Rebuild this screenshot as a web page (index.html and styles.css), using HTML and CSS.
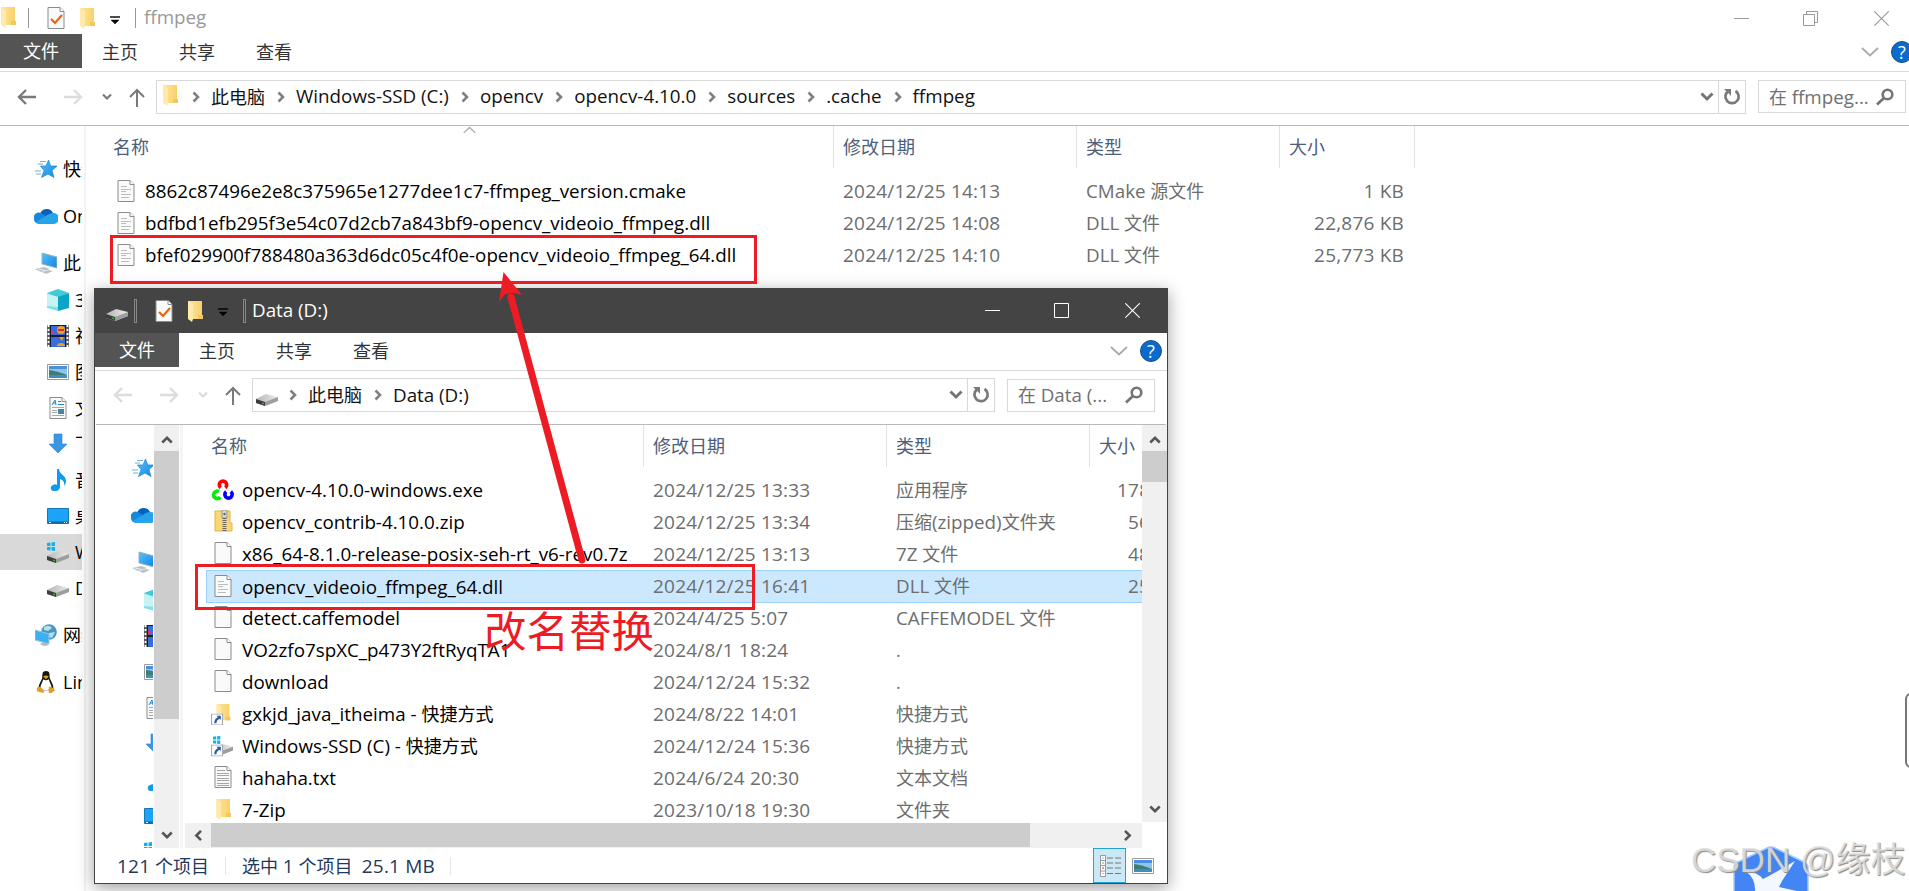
FILE: index.html
```
<!DOCTYPE html>
<html lang="zh-CN">
<head>
  <meta charset="UTF-8">
  <title>ffmpeg</title>
  <link rel="stylesheet" href="styles.css">
</head>
<body>

<!-- icons -->
<svg class="defs" xmlns="http://www.w3.org/2000/svg">
  <linearGradient id="gFolder" x1="0" x2="1"><stop offset="0" stop-color="#ffe69a"/><stop offset="1" stop-color="#f7cf68"/></linearGradient>
  <linearGradient id="gDrive" x1="0" x2="1"><stop offset="0" stop-color="#b5b5b5"/><stop offset="1" stop-color="#ececec"/></linearGradient>
  <linearGradient id="gBlue" x1="0" y1="0" x2="1" y2="1"><stop offset="0" stop-color="#55c1ff"/><stop offset="1" stop-color="#1286dd"/></linearGradient>
  <symbol id="folder" viewBox="0 0 22 22"><path d="M4 1h14v14l1 1v3H4z" fill="url(#gFolder)"/><path d="M14 15h5v4h-5z" fill="#f4c75a"/><path d="M4 1l5 3v15l-1 3-4-3z" fill="#ffe9ac"/></symbol>
  <symbol id="page" viewBox="0 0 22 22"><path d="M3 .5h12l4 4v17H3z" fill="#f9fafa" stroke="#8b8b8b"/><path d="M15 .5v4h4" fill="#fff" stroke="#8b8b8b"/></symbol>
  <symbol id="dll" viewBox="0 0 22 22"><use href="#page"/><path d="M6 6.500h6M6 9.500h10M6 11.500h5M6 14.500h10M6 17.500h8" stroke="#bcbcbc" /></symbol>
  <symbol id="txt" viewBox="0 0 22 22"><use href="#page"/><path d="M5 4.500h8M5 7.500h12M5 9.500h12M5 12.500h12M5 14.500h12M5 17.500h12M5 19.500h12" stroke="#a5a5a5"/></symbol>
  <symbol id="check" viewBox="0 0 22 22"><use href="#page"/><path d="M6 12l4 4 7-8" fill="none" stroke="#f1600f" stroke-width="2.200"/></symbol>
  <symbol id="drive" viewBox="0 0 22 22"><path d="M0 13l10-5 12 3v4l-13 5-9-3z" fill="url(#gDrive)"/><path d="M0 13l9 3v4l-9-3z" fill="#3d3d3d"/><path d="M9 16l13-5v4L9 20z" fill="#9d9d9d"/><path d="M6 16.500l2 .7v1l-2-.7z" fill="#3fd34a"/></symbol>
  <symbol id="windrive" viewBox="0 0 22 22"><use href="#drive" y="2"/><path d="M0 2l3.500-.5v3.500H0zM4.500 1.400L8 1v4H4.500zM0 6h3.500v3.500L0 9zM4.500 6H8v4l-3.500-.4z" fill="#0cb4ee"/></symbol>
  <symbol id="star" viewBox="0 0 22 22"><path d="M13.500 2l2.200 6H22l-5 4.500 2 7-6-3.500-6.500 3.500 2.500-7L5.500 8H11z" fill="url(#gBlue)" stroke="#1b83d3" stroke-width=".7"/><path d="M5 3.500h6M3 6h5M0 13h6M1 16h5" stroke="#5aa9de" stroke-width=".9"/></symbol>
  <symbol id="cloud" viewBox="0 0 24 22"><path d="M6 9a7 7 0 0 1 13-1l-5 7-9-3z" fill="#0a5fb8"/><path d="M0 14a5 5 0 0 1 7-6l9 6-8 5H5a5 5 0 0 1-5-5z" fill="#1789dd"/><path d="M14 9.500a8 8 0 0 1 5-1.500 5.500 5.500 0 0 1 1 11H6a5 5 0 0 1-4-2z" fill="#27a3ec"/></symbol>
  <symbol id="pc" viewBox="0 0 22 22"><path d="M7 1l15 4v11L7 12z" fill="url(#gBlue)" stroke="#95b4c7"/><path d="M0 17l9-2 6 2-9 3zM7 20l7-2 4 1-7 3z" fill="#b8c2c9"/><path d="M3 17l7 1.500" stroke="#eee"/></symbol>
  <symbol id="cube" viewBox="0 0 22 22"><path d="M0 4l11 3v15L0 19z" fill="#7ee3e6"/><path d="M11 7l11-3v15l-11 3z" fill="#0aa5c6"/><path d="M0 4l11-4 11 4-11 4z" fill="#42cad6"/><path d="M0 5l11 3v10L0 17z" fill="#c7f4f2"/></symbol>
  <symbol id="film" viewBox="0 0 22 22"><path d="M0 0h22v22H0z" fill="#5b5b5b"/><path d="M3 0h16v22H3z" fill="#151a35"/><path d="M4 1h14v9H4zM4 12h14v10H4z" fill="#3a6ddc"/><path d="M1.500 0v22M20.500 0v22" stroke="#fff" stroke-width="1.800" stroke-dasharray="2 2"/><circle cx="14" cy="5" r="4" fill="#f3a21c"/><path d="M11 4h6v2h-6z" fill="#d82d2d"/><path d="M12 12h5l-2 4zM10 21a4 3 0 0 1 8 0z" fill="#e8a021"/><path d="M4 5l4 3-4 2z" fill="#da3b5c"/></symbol>
  <symbol id="pic" viewBox="0 0 22 22"><path d="M.5 3.500h21v15H.5z" fill="#fff" stroke="#9a9a9a"/><path d="M2 5h18v12H2z" fill="#8cc4ef"/><path d="M2 5h18v3H2z" fill="#4b8fe0"/><path d="M2 9q8 1 18 5v3H2z" fill="#3f7d73"/><path d="M2 14h18v3H2z" fill="#3b8fc4"/></symbol>
  <symbol id="doc" viewBox="0 0 22 22"><use href="#page"/><path d="M5 8l3-5 1 5M6 6h3M11 4.500h3M11 7.500h6" stroke="#2488cf" fill="none"/><path d="M5 10.500h12M5 13.500h5M5 15.500h5M5 18.500h12" stroke="#a8a8a8"/><path d="M11 12h6v5h-6z" fill="#4385a6"/></symbol>
  <symbol id="down" viewBox="0 0 22 22"><path d="M7 1h8v10h5l-9 9-9-9h5z" fill="#3a97e4" stroke="#2c82cf" stroke-width=".6"/></symbol>
  <symbol id="note" viewBox="0 0 22 22"><path d="M10 0h2c0 5 7 6 7 12 0 2-1 4-2 5 1-5-2-6-4-7v8c0 3-4 5-7 4s-3-5 0-6c2-1 3-1 4 0z" fill="#0d9af0"/></symbol>
  <symbol id="desk" viewBox="0 0 22 22"><path d="M.5 3.500h21v15H.5z" fill="#1ca4fb" stroke="#1477b8"/><path d="M1 16.500h20v2H1z" fill="#0e67a7"/><path d="M2 17.500h2M17 17.500h1M19 17.500h1" stroke="#fff"/></symbol>
  <symbol id="net" viewBox="0 0 22 22"><circle cx="14" cy="8" r="7.800" fill="#4798c4"/><path d="M9 3q5-3 8 1l-4 3-4-1zM14 9l6-1-3 6-3-1z" fill="#b6dfea"/><path d="M0 6l14 4v10L0 16z" fill="#3cb0f6" stroke="#9cc4d8"/><path d="M5 20l4-2 5 3-5 1z" fill="#a9b7bf"/></symbol>
  <symbol id="tux" viewBox="0 0 20 24"><path d="M10 0c4 0 4 3 4 7 1 4 5 8 4 14H2C1 15 5 11 6 7c0-4 0-7 4-7z" fill="#161616"/><path d="M7 9q3 2 6 0c1 4 3 6 3 9 0 4-12 4-12 0 0-3 2-5 3-9z" fill="#fff"/><path d="M7 6q3-2 6 0l-3 3zM0 18l4-1 4 5-1 2-7-2zM13 17l4 1 3 3-4 3h-3z" fill="#e0a21b"/></symbol>
  <symbol id="cv" viewBox="0 0 24 24"><g fill="none" stroke-width="4"><path d="M9.500 9.500a4 4 0 1 1 5 0" stroke="#f00"/><path d="M7.500 13.700a4 4 0 1 0 1.500 6" stroke="#0e0"/><path d="M15.500 13.700a4 4 0 1 0 5 0" stroke="#00f"/></g></symbol>
  <symbol id="zip" viewBox="0 0 22 22"><path d="M3 1h15v12h2v8H3z" fill="#f9d874" stroke="#e0b64a"/><path d="M10 0h5v8h-5z" fill="#d9d9d9" stroke="#888" stroke-width=".8"/><path d="M12.500 8v14" stroke="#666" stroke-width="4" stroke-dasharray="1 1"/><circle cx="12.500" cy="4" r="1.200" fill="#666"/></symbol>
  <symbol id="lnk" viewBox="0 0 11 11"><path d="M.5.500h10v10H.5z" fill="#fff" stroke="#aaa"/><path d="M5 2h4v4L7.800 4.900C6 6 5 7 5 9H3c0-3 1-4.500 3.300-5.600z" fill="#2b5ca5"/></symbol>
  <symbol id="flnk" viewBox="0 0 24 22"><use href="#folder" x="1" width="22" height="20"/><use href="#lnk" y="10.500" width="12" height="12"/></symbol>
  <symbol id="dlnk" viewBox="0 0 24 22"><use href="#windrive" x="1" width="22" height="20"/><use href="#lnk" y="9.500" width="12" height="12"/></symbol>
  <symbol id="crumb" viewBox="0 0 8 12"><path d="M1.500 1.500L6 6l-4.500 4.500" fill="none" stroke="#808080" stroke-width="2.600"/></symbol>
  <symbol id="left" viewBox="0 0 20 16"><path d="M19 8H2M9 1L2 8l7 7" fill="none" stroke="currentColor" stroke-width="2.400"/></symbol>
  <symbol id="right" viewBox="0 0 20 16"><path d="M1 8h17M11 1l7 7-7 7" fill="none" stroke="currentColor" stroke-width="2.400"/></symbol>
  <symbol id="up" viewBox="0 0 16 20"><path d="M8 19V2M1 9l7-7 7 7" fill="none" stroke="currentColor" stroke-width="2"/></symbol>
  <symbol id="small" viewBox="0 0 10 8"><path d="M1 1.500l4 4 4-4" fill="none" stroke="currentColor" stroke-width="2.200"/></symbol>
  <symbol id="thick" viewBox="0 0 14 10"><path d="M1.500 1.500L7 7l5.500-5.500" fill="none" stroke="currentColor" stroke-width="3"/></symbol>
  <symbol id="thin" viewBox="0 0 18 10"><path d="M1 1l8 7.500L17 1" fill="none" stroke="#aaa" stroke-width="1.800"/></symbol>
  <symbol id="refresh" viewBox="0 0 18 18"><path d="M12.500 3a6.600 6.600 0 1 1-7.500.4" fill="none" stroke="#7a7a7a" stroke-width="2.700"/><path d="M1 1h7v7l-2-2.300z" fill="#7a7a7a"/></symbol>
  <symbol id="find" viewBox="0 0 18 18"><circle cx="11.500" cy="6.500" r="4.800" fill="none" stroke="#757575" stroke-width="2.600"/><path d="M8 10l-7 6.500" stroke="#757575" stroke-width="2.800"/></symbol>
  <symbol id="drop" viewBox="0 0 10 9"><path d="M0 1h10" stroke="currentColor" stroke-width="1.400"/><path d="M1 4h8L5 8z" fill="#000" stroke="currentColor" stroke-width=".4"/></symbol>
  <symbol id="min" viewBox="0 0 15 15"><path d="M0 7.500h15" stroke="currentColor"/></symbol>
  <symbol id="max" viewBox="0 0 15 15"><path d="M.5.500h14v14H.5z" fill="none" stroke="currentColor"/></symbol>
  <symbol id="restore" viewBox="0 0 15 15"><path d="M.5 3.500h11v11H.5zM3.500 3.500v-3h11v11h-3" fill="none" stroke="currentColor"/></symbol>
  <symbol id="close" viewBox="0 0 15 15"><path d="M.3.300l14.400 14.400M14.700.300L.300 14.700" stroke="currentColor" stroke-width="1.100"/></symbol>
  <symbol id="list" viewBox="0 0 22 22"><path d="M1.500.500h5v21h-5zM1.500 5.500h5M1.500 10.500h5M1.500 16h5" fill="#fff" stroke="#999"/><path d="M8 3h6M16 3h6M8 8h6M16 8h6M8 13h6M16 13h6M8 18.500h6M16 18.500h6" stroke="#777"/><path d="M3.500 3h1M3.500 18.500h1" stroke="#38a" /><path d="M3.500 13h1" stroke="#d22" stroke-width="2"/><path d="M3.500 8h1" stroke="#384" stroke-width="1.500"/></symbol>
</svg>

<!-- back window -->
<div class="window back">
  <div class="titlebar">
    <svg class="ic"><use href="#folder"/></svg>
    <i class="bar"></i>
    <svg class="ic tick"><use href="#check"/></svg>
    <svg class="ic fold"><use href="#folder"/></svg>
    <svg class="dropdown"><use href="#drop"/></svg>
    <i class="bar"></i>
    <span class="caption en">ffmpeg</span>
    <div class="controls">
      <svg><use href="#min"/></svg><svg><use href="#restore"/></svg><svg><use href="#close"/></svg>
    </div>
  </div>
  <div class="tabs">
    <span class="file">文件</span><span>主页</span><span>共享</span><span>查看</span>
    <svg class="expand"><use href="#thin"/></svg>
    <b class="help">?</b>
  </div>
  <div class="address">
    <svg class="nav-arrow"><use href="#left"/></svg>
    <svg class="nav-arrow off"><use href="#right"/></svg>
    <svg class="nav-small"><use href="#small"/></svg>
    <svg class="nav-up"><use href="#up"/></svg>
    <div class="path">
      <svg class="ic"><use href="#folder"/></svg>
      <svg class="crumb"><use href="#crumb"/></svg><span>此电脑</span>
      <svg class="crumb"><use href="#crumb"/></svg><span class="en">Windows-SSD (C:)</span>
      <svg class="crumb"><use href="#crumb"/></svg><span class="en">opencv</span>
      <svg class="crumb"><use href="#crumb"/></svg><span class="en">opencv-4.10.0</span>
      <svg class="crumb"><use href="#crumb"/></svg><span class="en">sources</span>
      <svg class="crumb"><use href="#crumb"/></svg><span class="en">.cache</span>
      <svg class="crumb"><use href="#crumb"/></svg><span class="en">ffmpeg</span>
      <svg class="open"><use href="#thick"/></svg>
      <div class="reload"><svg><use href="#refresh"/></svg></div>
    </div>
    <div class="search"><span>在 <span class="en">ffmpeg...</span></span><svg><use href="#find"/></svg></div>
  </div>
  <div class="content">
    <div class="tree">
      <div class="top"><svg class="ic"><use href="#star"/></svg>快速访问</div>
      <div class="top"><svg class="ic cloud"><use href="#cloud"/></svg>OneDrive</div>
      <div class="top"><svg class="ic"><use href="#pc"/></svg>此电脑</div>
      <div class="first"><svg class="ic"><use href="#cube"/></svg>3D 对象</div>
      <div><svg class="ic"><use href="#film"/></svg>视频</div>
      <div><svg class="ic"><use href="#pic"/></svg>图片</div>
      <div><svg class="ic"><use href="#doc"/></svg>文档</div>
      <div><svg class="ic"><use href="#down"/></svg>下载</div>
      <div><svg class="ic"><use href="#note"/></svg>音乐</div>
      <div><svg class="ic"><use href="#desk"/></svg>桌面</div>
      <div class="current"><svg class="ic"><use href="#windrive"/></svg>Windows</div>
      <div><svg class="ic"><use href="#drive"/></svg>Data (D:)</div>
      <div class="top net"><svg class="ic"><use href="#net"/></svg>网络</div>
      <div class="top"><svg class="ic tux"><use href="#tux"/></svg>Linux</div>
    </div>
    <div class="files">
      <svg class="sort"><use href="#thin"/></svg>
      <div class="head"><span>名称</span><span>修改日期</span><span>类型</span><span>大小</span></div>
      <div class="row"><span class="name en"><svg class="ic"><use href="#dll"/></svg>8862c87496e2e8c375965e1277dee1c7-ffmpeg_version.cmake</span><span class="num">2024/12/25 14:13</span><span><span class="en">CMake</span> 源文件</span><span class="size num">1 KB</span></div>
      <div class="row"><span class="name en"><svg class="ic"><use href="#dll"/></svg>bdfbd1efb295f3e54c07d2cb7a843bf9-opencv_videoio_ffmpeg.dll</span><span class="num">2024/12/25 14:08</span><span><span class="en">DLL</span> 文件</span><span class="size num">22,876 KB</span></div>
      <div class="row"><span class="name en"><svg class="ic"><use href="#dll"/></svg>bfef029900f788480a363d6dc05c4f0e-opencv_videoio_ffmpeg_64.dll</span><span class="num">2024/12/25 14:10</span><span><span class="en">DLL</span> 文件</span><span class="size num">25,773 KB</span></div>
    </div>
  </div>
</div>

<!-- front window -->
<div class="window front">
  <div class="titlebar">
    <svg class="ic"><use href="#drive"/></svg>
    <i class="bar"></i>
    <svg class="ic tick"><use href="#check"/></svg>
    <svg class="ic fold"><use href="#folder"/></svg>
    <svg class="dropdown"><use href="#drop"/></svg>
    <i class="bar"></i>
    <span class="caption en">Data (D:)</span>
    <div class="controls">
      <svg><use href="#min"/></svg><svg><use href="#max"/></svg><svg><use href="#close"/></svg>
    </div>
  </div>
  <div class="tabs">
    <span class="file">文件</span><span>主页</span><span>共享</span><span>查看</span>
    <svg class="expand"><use href="#thin"/></svg>
    <b class="help">?</b>
  </div>
  <div class="address">
    <svg class="nav-arrow off"><use href="#left"/></svg>
    <svg class="nav-arrow off"><use href="#right"/></svg>
    <svg class="nav-small off"><use href="#small"/></svg>
    <svg class="nav-up"><use href="#up"/></svg>
    <div class="path">
      <svg class="ic"><use href="#drive"/></svg>
      <svg class="crumb"><use href="#crumb"/></svg><span>此电脑</span>
      <svg class="crumb"><use href="#crumb"/></svg><span class="en">Data (D:)</span>
      <svg class="open"><use href="#thick"/></svg>
      <div class="reload"><svg><use href="#refresh"/></svg></div>
    </div>
    <div class="search"><span>在 <span class="en">Data (...</span></span><svg><use href="#find"/></svg></div>
  </div>
  <div class="content">
    <div class="tree">
      <div class="top"><svg class="ic"><use href="#star"/></svg></div>
      <div class="top"><svg class="ic cloud"><use href="#cloud"/></svg></div>
      <div class="top"><svg class="ic"><use href="#pc"/></svg></div>
      <div class="first"><svg class="ic"><use href="#cube"/></svg></div>
      <div><svg class="ic"><use href="#film"/></svg></div>
      <div><svg class="ic"><use href="#pic"/></svg></div>
      <div><svg class="ic"><use href="#doc"/></svg></div>
      <div><svg class="ic"><use href="#down"/></svg></div>
      <div><svg class="ic"><use href="#note"/></svg></div>
      <div><svg class="ic"><use href="#desk"/></svg></div>
      <div><svg class="ic"><use href="#windrive"/></svg></div>
    </div>
    <div class="vscroll">
      <svg class="flip"><use href="#thick"/></svg><i></i><svg><use href="#thick"/></svg>
    </div>
    <div class="split"></div>
    <div class="main">
      <div class="files">
        <div class="head"><span>名称</span><span>修改日期</span><span>类型</span><span>大小</span></div>
        <div class="row"><span class="name en"><svg class="ic wide"><use href="#cv"/></svg>opencv-4.10.0-windows.exe</span><span class="num">2024/12/25 13:33</span><span>应用程序</span><span class="size big num">178</span></div>
        <div class="row"><span class="name en"><svg class="ic"><use href="#zip"/></svg>opencv_contrib-4.10.0.zip</span><span class="num">2024/12/25 13:34</span><span>压缩<span class="en">(zipped)</span>文件夹</span><span class="size num">56</span></div>
        <div class="row"><span class="name en"><svg class="ic"><use href="#page"/></svg>x86_64-8.1.0-release-posix-seh-rt_v6-rev0.7z</span><span class="num">2024/12/25 13:13</span><span><span class="en">7Z</span> 文件</span><span class="size num">48</span></div>
        <div class="row selected"><span class="name en"><svg class="ic"><use href="#dll"/></svg>opencv_videoio_ffmpeg_64.dll</span><span class="num">2024/12/25 16:41</span><span><span class="en">DLL</span> 文件</span><span class="size num">25</span></div>
        <div class="row"><span class="name en"><svg class="ic"><use href="#page"/></svg>detect.caffemodel</span><span class="num">2024/4/25 5:07</span><span><span class="en">CAFFEMODEL</span> 文件</span><span class="size"></span></div>
        <div class="row"><span class="name en"><svg class="ic"><use href="#page"/></svg>VO2zfo7spXC_p473Y2ftRyqTA1</span><span class="num">2024/8/1 18:24</span><span>.</span><span class="size"></span></div>
        <div class="row"><span class="name en"><svg class="ic"><use href="#page"/></svg>download</span><span class="num">2024/12/24 15:32</span><span>.</span><span class="size"></span></div>
        <div class="row"><span class="name"><svg class="ic wide"><use href="#flnk"/></svg><span class="en">gxkjd_java_itheima - </span>快捷方式</span><span class="num">2024/8/22 14:01</span><span>快捷方式</span><span class="size"></span></div>
        <div class="row"><span class="name"><svg class="ic wide"><use href="#dlnk"/></svg><span class="en">Windows-SSD (C) - </span>快捷方式</span><span class="num">2024/12/24 15:36</span><span>快捷方式</span><span class="size"></span></div>
        <div class="row"><span class="name en"><svg class="ic"><use href="#txt"/></svg>hahaha.txt</span><span class="num">2024/6/24 20:30</span><span>文本文档</span><span class="size"></span></div>
        <div class="row"><span class="name en"><svg class="ic"><use href="#folder"/></svg>7-Zip</span><span class="num">2023/10/18 19:30</span><span>文件夹</span><span class="size"></span></div>
      </div>
      <div class="hscroll">
        <svg class="turn-l"><use href="#thick"/></svg><i></i><svg class="turn-r"><use href="#thick"/></svg>
      </div>
    </div>
    <div class="vscroll right">
      <svg class="flip"><use href="#thick"/></svg><i></i><svg><use href="#thick"/></svg>
    </div>
  </div>
  <div class="status">
    <span class="count"><span class="num">121</span> 个项目</span>
    <span class="picked">选中 <span class="num">1</span> 个项目&nbsp; <span class="num">25.1 MB</span></span>
    <div class="view on"><svg class="ic"><use href="#list"/></svg></div>
    <div class="view"><svg class="ic"><use href="#pic"/></svg></div>
  </div>
</div>

<!-- red marks -->
<div class="mark mark-target"></div>
<div class="mark mark-source"></div>
<svg class="arrow" viewBox="0 0 100 300">
  <path d="M41 29L112 292" transform="translate(-30 -2)" stroke="#ed1c24" stroke-width="7" stroke-linecap="round"/>
  <path d="M3.500 2L22 25l-9-2-8 1-6 8z" fill="#ed1c24"/>
</svg>
<div class="note">改名替换</div>

<div class="side-tab"></div>
<svg class="badge" viewBox="0 0 76 46">
  <path d="M1 46V22Q1 18 5 16L34 2q4-2 8 0l29 14q4 2 4 6v24z" fill="#4385f5" stroke="#a9c8fb" stroke-width="1.500"/>
  <path d="M12 25q11 0 18 8 10-5 32-18l-13 20-3 6 22 5H22q1-14-10-21z" fill="#f3f7ff"/>
</svg>
<div class="watermark">CSDN @缘枝</div>

</body>
</html>
```

FILE: styles.css
```
* {
  margin: 0;
  padding: 0;
  box-sizing: border-box;
}

body {
  position: relative;
  width: 1909px;
  height: 891px;
  overflow: hidden;
  background: #fff;
  font-family: "Open Sans", "Noto Sans CJK SC", sans-serif;
  font-size: 18px;
  line-height: 24px;
  color: #000;
  white-space: nowrap;
}

svg {
  display: block;
  flex: none;
}

.defs {
  position: absolute;
  width: 0;
  height: 0;
}

.en {
  font-size: 18.8px;
}

.num {
  font-size: 19px;
  letter-spacing: 0.2px;
}

.ic {
  width: 22px;
  height: 22px;
}

.off {
  color: #dcdcdc !important;
}

.window {
  display: flex;
  flex-direction: column;
  background: #fff;
}

.back {
  height: 891px;
}

.front {
  position: absolute;
  left: 94px;
  top: 288px;
  width: 1074px;
  height: 596px;
  border: 1px solid #444;
  border-top: none;
  box-shadow: 0 4px 16px rgba(0, 0, 0, 0.38);
}

/* title bar */
.titlebar {
  display: flex;
  align-items: center;
  flex: none;
  height: 34px;
  color: #999;
}

.front .titlebar {
  height: 45px;
  background: #444;
  color: #fff;
  padding-left: 11px;
}

.bar {
  width: 1px;
  height: 20px;
  background: #999;
}

.back .titlebar > .ic:first-child {
  margin: 0 9px 2px -3px;
}

.back .titlebar {
  padding-bottom: 6px;
  padding-top: 8px;
}

.front .titlebar > .ic:first-child {
  margin: 2px 6px 0 0;
}

.front .bar {
  width: 3px;
  height: 24px;
  border: 1px solid #888;
  background: #444;
}

.tick {
  margin-left: 16px;
}

.fold {
  margin-left: 9px;
}

.dropdown {
  width: 10px;
  height: 9px;
  margin: 4px 15px 0 12px;
  color: #000;
}

.caption {
  margin: -2px 0 0 8px;
}

.front .caption {
  margin-left: 6px;
}

.controls {
  display: flex;
  gap: 54px;
  margin-left: auto;
  margin-right: 20px;
}

.front .controls {
  margin-right: 27px;
}

.controls svg {
  width: 15px;
  height: 15px;
}

.controls svg:last-child {
  margin-left: 2px;
}

/* ribbon tabs */
.tabs {
  display: flex;
  flex: none;
  height: 38px;
  line-height: 37px;
  border-bottom: 1px solid #dadada;
  color: #333;
}

.tabs span {
  margin-left: 41px;
}

.tabs .file {
  width: 82px;
  height: 34px;
  margin: 0 -21px 0 0;
  background: #545454;
  color: #fff;
  line-height: 35px;
  text-align: center;
}

.front .tabs .file {
  width: 84px;
}

.expand {
  width: 18px;
  height: 10px;
  margin: 13px 12px 0 auto;
}

.help {
  width: 22px;
  height: 22px;
  margin: 7px -4px 0 0;
  border: 1px solid #15508a;
  border-radius: 50%;
  background: #0a6bcd;
  color: #fff;
  font-size: 18px;
  font-weight: 400;
  line-height: 20px;
  text-align: center;
}

.front .help {
  margin-right: 5px;
}

/* address bar */
.address {
  display: flex;
  flex: none;
  align-items: center;
  height: 54px;
  padding: 0 3px 4px 17px;
  border-bottom: 1px solid #b9b9b9;
  color: #7a7a7a;
}

.front .address {
  margin: 0 1px;
  padding: 0 11px 5px 17px;
}

.nav-arrow {
  width: 20px;
  height: 16px;
  margin-right: 26px;
}

.nav-arrow + .nav-arrow {
  margin-right: 19px;
}

.nav-small {
  width: 10px;
  height: 8px;
}

.nav-up {
  width: 16px;
  height: 20px;
  margin: 2px 11px 0 17px;
}

.path {
  display: flex;
  flex: 1;
  align-items: center;
  height: 34px;
  border: 1px solid #d9d9d9;
  color: #111;
}

.path .ic {
  margin: 0 11px 0 3px;
}

.back .path .ic {
  margin: -3px 11px 0 2px;
}

.front .path .ic {
  margin-top: 4px;
}

.crumb {
  width: 8px;
  height: 12px;
}

.path span {
  margin: 0 12px 0 11px;
}

.path .en {
  margin-top: -1px;
}

.path .open {
  width: 14px;
  height: 10px;
  margin: 0 4px 0 auto;
  color: #757575;
}

.reload {
  display: flex;
  align-items: center;
  justify-content: center;
  width: 27px;
  height: 100%;
  border-left: 1px solid #d9d9d9;
}

.reload svg,
.search svg {
  width: 18px;
  height: 18px;
}

.search {
  display: flex;
  align-items: center;
  justify-content: space-between;
  width: 148px;
  height: 33px;
  margin-left: 12px;
  padding: 0 11px 0 10px;
  border: 1px solid #d9d9d9;
  color: #707070;
}

/* navigation tree */
.content {
  display: flex;
  flex: 1;
  min-height: 0;
}

.tree {
  width: 82px;
  padding-top: 19px;
  overflow: hidden;
}

.tree div {
  display: flex;
  align-items: center;
  gap: 6px;
  height: 36px;
  padding-left: 47px;
}

.tree .top {
  height: 47px;
  padding-left: 35px;
}

.tree .first {
  margin-top: -4px;
}

.tree .cloud,
.tree .tux {
  width: 24px;
  margin: 0 -1px;
}

.tree .current {
  background: #d9d9d9;
}

.tree .net {
  margin-top: 5px;
}

.back .files {
  position: relative;
  flex: 1;
  margin-left: 2px;
  border-left: 2px solid #f3f3f3;
}

.front .tree {
  width: 58px;
}

.front .tree div {
  padding-left: 49px;
}

.front .tree .top {
  padding-left: 37px;
}

.front .tree .first {
  margin-top: -3px;
}

/* file list */
.sort {
  position: absolute;
  left: 377px;
  top: 0;
  width: 13px;
  height: 8px;
  transform: rotate(180deg);
}

.head,
.row {
  display: grid;
  grid-template-columns: 748px 243px 203px 135px;
}

.head {
  height: 40px;
  margin-bottom: 9px;
  color: #4c607a;
  line-height: 42px;
}

.head span {
  border-right: 1px solid #e2e2e2;
  padding-left: 9px;
}

.head span:first-child {
  padding-left: 27px;
}

.row {
  height: 32px;
  line-height: 32px;
  color: #6d6d6d;
}

.row > span {
  padding-left: 9px;
}

.row > .name {
  display: flex;
  align-items: center;
  padding-left: 28px;
  color: #000;
  white-space: pre;
}

.name .ic {
  margin: -1px 8px 0 1px;
}

.row > .size {
  padding: 0 11px 0 0;
  text-align: right;
}

/* scrollbars */
.vscroll {
  display: flex;
  flex-direction: column;
  align-items: center;
  width: 25px;
  margin-left: 1px;
  background: #f0f0f0;
  color: #555;
}

.vscroll svg,
.hscroll svg {
  width: 12px;
  height: 9px;
}

.vscroll .flip {
  margin: 10px 0 7px;
}

.vscroll i {
  width: 100%;
  height: 268px;
  margin-bottom: auto;
  background: #cdcdcd;
}

.vscroll svg:last-child {
  margin-bottom: 8px;
}

.vscroll.right {
  height: 397px;
  margin-left: 0;
}

.vscroll.right i {
  height: 31px;
}

.flip {
  transform: rotate(180deg);
}

.turn-l {
  transform: rotate(90deg);
}

.turn-r {
  transform: rotate(-90deg);
}

.split {
  width: 3px;
  margin: 0 2px 0 1px;
  background: #f5f5f5;
}

.main {
  display: flex;
  flex: 1;
  flex-direction: column;
  min-width: 0;
}

.front .files {
  height: 398px;
  overflow: hidden;
}

.front .head,
.front .row {
  grid-template-columns: 459px 243px 203px 52px;
}

.front .head {
  height: 39px;
  margin-bottom: 10px;
}

.front .head span:first-child {
  padding-left: 26px;
}

.front .head span:last-child,
.row > .size {
  overflow: hidden;
  border: none;
}

.front .row > .name {
  padding-left: 27px;
}

.front .name .ic {
  margin: -2px 8px 0 0;
}

.front .name .wide {
  width: 24px;
  margin: -1px 7px 0 -1px;
}

.front .row > .size {
  padding: 0 0 0 38px;
  text-align: left;
}

.front .row > .big {
  padding-left: 27px;
}

.front .selected {
  grid-template-columns: 437px 243px 203px 52px;
  margin-left: 21px;
  height: 33px;
  margin-bottom: -1px;
  background: #cce8ff;
  border-left: 1px solid #99d1ff;
  box-shadow: inset 0 1px #99d1ff, inset 0 -1px #99d1ff;
}

.front .selected > .name {
  padding-left: 5px;
}

.hscroll {
  display: flex;
  align-items: center;
  height: 25px;
  background: #f0f0f0;
  color: #555;
}

.hscroll .turn-l {
  margin: 0 7px;
}

.hscroll i {
  width: 819px;
  height: 24px;
  margin-bottom: 1px;
  background: #cdcdcd;
}

.hscroll .turn-r {
  margin: 0 8px 0 auto;
}

/* status bar */
.status {
  display: flex;
  align-items: center;
  flex: none;
  height: 35px;
  padding: 0 8px 0 22px;
  color: #1e395b;
}

.status > span {
  height: 18px;
  line-height: 18px;
  border-right: 1px solid #e5e5e5;
}

.count {
  width: 109px;
}

.picked {
  width: 225px;
  padding-left: 16px;
}

.view {
  display: flex;
  align-items: center;
  justify-content: center;
  width: 33px;
  height: 35px;
}

.view.on {
  margin-left: auto;
  border: 1px solid #26a0da;
  background: #cbe8f6;
}

/* marks over the windows */
.mark {
  position: absolute;
  border: 3px solid #ed1c24;
}

.mark-target {
  left: 110px;
  top: 235px;
  width: 647px;
  height: 49px;
}

.mark-source {
  left: 195px;
  top: 564px;
  width: 560px;
  height: 46px;
}

.arrow {
  position: absolute;
  left: 500px;
  top: 270px;
  width: 100px;
  height: 300px;
  overflow: visible;
}

.note {
  position: absolute;
  left: 484px;
  top: 607px;
  color: #ed1c24;
  font-size: 42.5px;
  line-height: 48px;
}

.side-tab {
  position: absolute;
  left: 1905px;
  top: 693px;
  width: 12px;
  height: 75px;
  border: 2px solid #777;
  border-radius: 6px;
}

.badge {
  position: absolute;
  left: 1733px;
  top: 846px;
  width: 76px;
  height: 46px;
}

.watermark {
  position: absolute;
  left: 1691px;
  top: 837px;
  font-family: "Liberation Sans", "Noto Sans CJK SC", sans-serif;
  font-size: 35px;
  line-height: 46px;
  color: rgba(225, 225, 225, 0.85);
  text-shadow: 1px 1px 1px #888;
}
```
